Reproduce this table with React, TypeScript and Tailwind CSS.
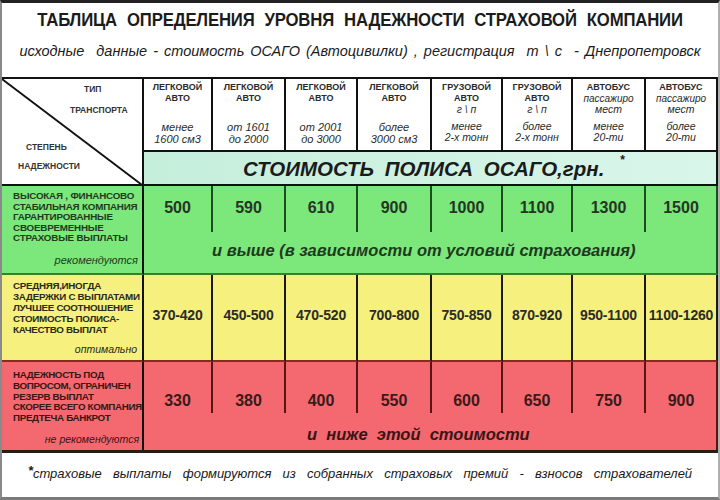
import React from "react";

const heads: { top: string[]; bottom: string[] }[] = [
  { top: ["ЛЕГКОВОЙ", "АВТО"], bottom: ["менее", "1600 см3"] },
  { top: ["ЛЕГКОВОЙ", "АВТО"], bottom: ["от 1601", "до 2000"] },
  { top: ["ЛЕГКОВОЙ", "АВТО"], bottom: ["от 2001", "до 3000"] },
  { top: ["ЛЕГКОВОЙ", "АВТО"], bottom: ["более", "3000 см3"] },
  { top: ["ГРУЗОВОЙ", "АВТО"], bottom: ["г \\ п", "менее", "2-х тонн"] },
  { top: ["ГРУЗОВОЙ", "АВТО"], bottom: ["г \\ п", "более", "2-х тонн"] },
  { top: ["АВТОБУС", "пассажиро"], bottom: ["мест", "менее", "20-ти"] },
  { top: ["АВТОБУС", "пассажиро"], bottom: ["мест", "более", "20-ти"] },
];

const green = ["500", "590", "610", "900", "1000", "1100", "1300", "1500"];
const yellow = ["370-420", "450-500", "470-520", "700-800", "750-850", "870-920", "950-1100", "1100-1260"];
const red = ["330", "380", "400", "550", "600", "650", "750", "900"];

const font = { fontFamily: '"Liberation Sans", Arial, sans-serif' };

export default function App() {
  return (
    <div
      className="w-[720px] h-[500px] bg-white border-l-2 border-r-2 border-l-[#8a8a8a] border-r-[#b0b0b0] border-t-[3px] border-t-[#222] border-b-[3px] border-b-[#7a7a7a] flex flex-col text-[#1b1b1b]"
      style={font}
    >
      <div className="h-[74px] flex flex-col items-center pt-[5px]">
        <div className="text-[18px] font-bold leading-[24px] tracking-[-0.2px] [word-spacing:6px] scale-x-[0.93] scale-y-[1.05]">
          ТАБЛИЦА ОПРЕДЕЛЕНИЯ УРОВНЯ НАДЕЖНОСТИ СТРАХОВОЙ КОМПАНИИ
        </div>
        <div className="mt-[9px] text-[14.5px] italic leading-[20px] [word-spacing:2px] whitespace-pre">
          {"исходные  данные - стоимость ОСАГО (Автоцивилки) , регистрация  т \\ с  - Днепропетровск"}
        </div>
      </div>

      <div className="grid grid-cols-[142px_69px_73px_72px_74px_71px_70px_73px_72px] grid-rows-[73px_34px_46px_43px_87px_51px_37px] border-t-2 border-t-[#111]">
        {/* diagonal header cell */}
        <div className="row-span-2 relative border-r-2 border-b-2 border-[#111] bg-white text-[8.5px] font-bold text-[#333] leading-none">
          <svg className="absolute inset-0" width="140" height="105" viewBox="0 0 140 105">
            <line x1="0" y1="0" x2="140" y2="106" stroke="#111" strokeWidth="1.8" />
          </svg>
          <span className="absolute left-[82px] top-[6px]">ТИП</span>
          <span className="absolute left-[68px] top-[27px]">ТРАНСПОРТА</span>
          <span className="absolute left-[24px] top-[64px]">СТЕПЕНЬ</span>
          <span className="absolute left-[16px] top-[83px]">НАДЕЖНОСТИ</span>
        </div>
        {heads.map((h, i) => (
          <div
            key={i}
            className="border-r-2 border-b-2 border-[#111] bg-white flex flex-col items-center pt-[3px] text-[#2a2a2a]"
          >
            <div className="flex flex-col items-center text-[9px] font-bold leading-[11px]">
              {h.top.map((t, j) => (
                <span key={j} className={j === 1 && i >= 6 ? "font-normal italic text-[10px]" : ""}>
                  {t}
                </span>
              ))}
            </div>
            {h.bottom.length === 3 ? (
              <div className="flex flex-col items-center text-[10.5px] italic leading-[11px]">
                <span>{h.bottom[0]}</span>
                <span className="mt-[6px]">{h.bottom[1]}</span>
                <span>{h.bottom[2]}</span>
              </div>
            ) : (
              <div className="flex flex-col items-center text-[11px] italic leading-[12px] mt-[17px]">
                {h.bottom.map((t, j) => (
                  <span key={j}>{t}</span>
                ))}
              </div>
            )}
          </div>
        ))}
        <div className="col-span-8 border-r-2 border-b-2 border-[#111] bg-gradient-to-r from-[#c5eedb] to-[#d9f6ea] flex items-center justify-center pr-[8px]">
          <span className="text-[20.5px] font-bold italic [word-spacing:5px] relative top-[1px]">
            СТОИМОСТЬ ПОЛИСА ОСАГО,грн.
          </span>
          <span className="text-[12px] font-bold relative -top-[8px] left-[16px]">*</span>
        </div>

        {/* green */}
        <div className="row-span-2 border-r-2 border-b-2 border-r-[#111] border-b-[#3f7a2f] bg-[#7ce77a] pl-[11px] pr-[1px] pt-[5px] flex flex-col text-[9.8px] font-bold leading-[10.6px] text-[#1f3a1f] whitespace-nowrap tracking-[-0.2px]">
          <span>ВЫСОКАЯ , ФИНАНСОВО</span>
          <span>СТАБИЛЬНАЯ КОМПАНИЯ</span>
          <span>ГАРАНТИРОВАННЫЕ</span>
          <span>СВОЕВРЕМЕННЫЕ</span>
          <span>СТРАХОВЫЕ ВЫПЛАТЫ</span>
          <span className="self-end italic font-normal text-[11px] mt-[11px] pr-[3px] tracking-normal">рекомендуются</span>
        </div>
        {green.map((v, i) => (
          <div key={i} className="border-r-2 border-[#1c4d1c] bg-[#7ce77a] flex justify-center pt-[10px]">
            <span className="text-[16px] font-bold text-[#253525]">{v}</span>
          </div>
        ))}
        <div className="col-span-8 border-r-2 border-b-2 border-r-[#1c4d1c] border-b-[#3f7a2f] bg-[#7ce77a] flex items-start pl-[68px] pt-[6px]">
          <span className="text-[16.5px] font-bold italic text-[#1f3a1f]">
            и выше (в зависимости от условий страхования)
          </span>
        </div>

        {/* yellow */}
        <div className="border-r-2 border-b-2 border-r-[#111] border-b-[#8a2a1f] bg-[#f6f07e] pl-[11px] pr-[1px] pt-[5px] flex flex-col text-[9.8px] font-bold leading-[11px] text-[#2a2a1a] whitespace-nowrap tracking-[-0.3px]">
          <span>СРЕДНЯЯ,ИНОГДА</span>
          <span>ЗАДЕРЖКИ С ВЫПЛАТАМИ</span>
          <span>ЛУЧШЕЕ СООТНОШЕНИЕ</span>
          <span>СТОИМОСТЬ ПОЛИСА-</span>
          <span>КАЧЕСТВО ВЫПЛАТ</span>
          <span className="self-end italic font-normal text-[10.5px] mt-[9px] pr-[4px] tracking-normal">оптимально</span>
        </div>
        {yellow.map((v, i) => (
          <div key={i} className="border-r-2 border-b-2 border-r-[#1a1a1a] border-b-[#8a2a1f] bg-[#f6f07e] flex items-center justify-center pb-[4px]">
            <span className="text-[14px] font-bold text-[#2b2b2b] tracking-[-0.2px] whitespace-nowrap">{v}</span>
          </div>
        ))}

        {/* red */}
        <div className="row-span-2 border-r-2 border-[#111] bg-[#f4696f] pl-[11px] pr-[1px] pt-[8px] flex flex-col text-[9.8px] font-bold leading-[10.8px] text-[#3a1515] whitespace-nowrap tracking-[-0.35px]">
          <span>НАДЕЖНОСТЬ ПОД</span>
          <span>ВОПРОСОМ, ОГРАНИЧЕН</span>
          <span>РЕЗЕРВ ВЫПЛАТ</span>
          <span>СКОРЕЕ ВСЕГО КОМПАНИЯ</span>
          <span>ПРЕДТЕЧА БАНКРОТ</span>
          <span className="self-end italic font-normal text-[10.5px] mt-[10px] pr-[2px] tracking-normal">не рекомендуются</span>
        </div>
        {red.map((v, i) => (
          <div key={i} className="border-r-2 border-[#5a1414] bg-[#f4696f] flex justify-center pt-[27px]">
            <span className="text-[16px] font-bold text-[#3a1a1a]">{v}</span>
          </div>
        ))}
        <div className="col-span-8 border-r-2 border-[#5a1414] bg-[#f4696f] flex items-start pl-[163px] pt-[9px]">
          <span className="text-[16.5px] font-bold italic text-[#3a1515] whitespace-pre">
            {"и  ниже  этой  стоимости"}
          </span>
        </div>
      </div>

      <div className="flex-1 border-t-[3px] border-[#2a1a1a] flex items-center justify-center pb-[3px]">
        <span className="text-[13px] italic text-[#1a1a1a] whitespace-pre [word-spacing:2px]">
          <span className="font-bold relative -top-[3px]">*</span>
          {"страховые  выплаты  формируются  из  собранных  страховых  премий  -  взносов  страхователей"}
        </span>
      </div>
    </div>
  );
}
